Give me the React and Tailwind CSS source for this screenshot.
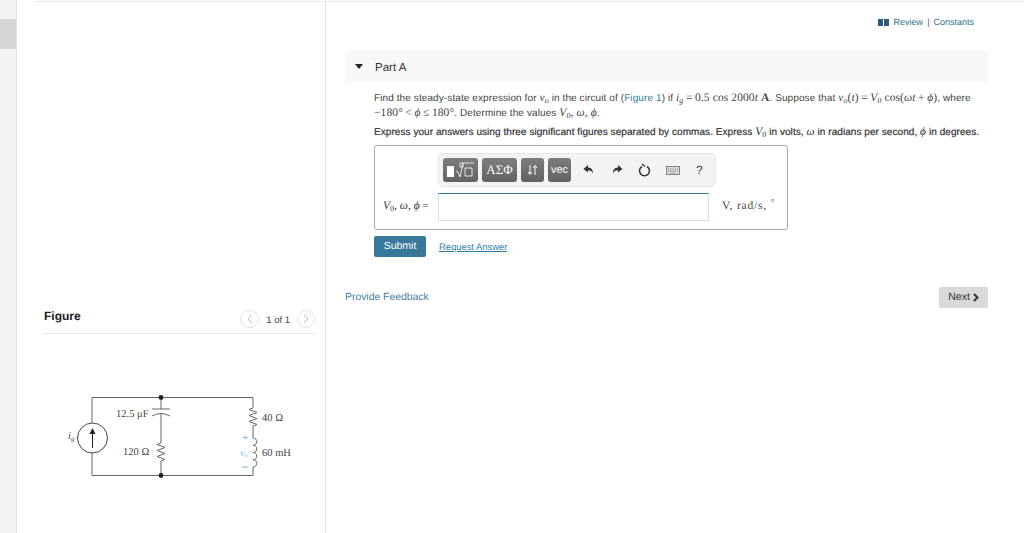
import React from "react";

const sans = { fontFamily: '"Liberation Sans", Arial, sans-serif' };

const M = ({ children, className = "" }) => (
  <span className={`font-['Liberation_Serif',serif] text-[11.5px] font-normal [-webkit-text-stroke:0] ${className}`}>{children}</span>
);
const I = ({ children }) => <i className="font-['Liberation_Serif',serif]">{children}</i>;
const Sub = ({ children }) => <sub className="text-[8px] leading-none">{children}</sub>;
const Eq = ({ children }) => <span className="mx-[2.5px]">{children}</span>;

const ToolBtn = ({ children, className = "" }) => (
  <div className={`h-6 rounded-[3px] bg-gradient-to-b from-[#7d7d7d] to-[#626262] text-white flex items-center justify-center ${className}`}>
    {children}
  </div>
);

const Circuit = () => (
  <svg width="240" height="100" viewBox="0 0 240 100" className="block">
    <g fill="none" stroke="#666" strokeWidth="1">
      <path d="M32 38V12.5H193V23M193 41V53M193 82V90.5H32V68" />
      <circle cx="32.5" cy="53" r="15" stroke="#444" />
      <path d="M32.5 63V46" stroke="#222" />
      <path d="M101 12.5V24M92 24H110M92 31Q101 26 110 31M101 28.5V58M101 76V90.5" />
      <path d="M101 58l-4 1.5 8 3-8 3 8 3-8 3 8 3-4 1.5" />
      <path d="M193 23l-4 1.5 8 3-8 3 8 3-8 3 8 3-4 1.5" />
      <path d="M193 53c5 0 5 7.25 0 7.25c5 0 5 7.25 0 7.25c5 0 5 7.25 0 7.25c5 0 5 7.25 0 7.25" />
    </g>
    <path d="M32.5 43l-3 6h6z" fill="#222" />
    <circle cx="101" cy="12.5" r="2.4" fill="#222" />
    <circle cx="101" cy="90.5" r="2.4" fill="#222" />
    <g fontFamily="Liberation Serif, serif" fontSize="10.5" fill="#444">
      <text x="56" y="32">12.5 μF</text>
      <text x="63" y="70">120 Ω</text>
      <text x="202" y="36">40 Ω</text>
      <text x="202" y="71">60 mH</text>
      <text x="8" y="54" fontStyle="italic">i</text>
      <text x="11" y="56" fontSize="7" fontStyle="italic">g</text>
    </g>
    <g fontFamily="Liberation Serif, serif" fill="#6fb7e0">
      <text x="182" y="56" fontSize="11">+</text>
      <text x="180" y="71" fontSize="10" fontStyle="italic">v</text>
      <text x="184.5" y="72" fontSize="6" fontStyle="italic">o</text>
      <path d="M182 82h6" stroke="#6fb7e0" />
    </g>
  </svg>
);

export default function App() {
  return (
    <div className="w-[1024px] h-[533px] flex overflow-hidden bg-white text-[#333] [text-rendering:geometricPrecision]" style={sans}>
      {/* side rail */}
      <div className="w-[17px] shrink-0 bg-[#f3f3f3] border-r border-[#e2e2e2] pt-[19px]">
        <div className="h-[30px] bg-[#d6d6d6]" />
      </div>

      <div className="ml-[17px] mt-px flex-1 flex border-t border-[#e8e8e8] min-w-0">
        {/* figure pane */}
        <div className="w-[292px] shrink-0 border-r border-[#dfdfe6] pl-[10px] pr-[10px] pt-[306px]">
          <div className="h-[26px] flex items-start justify-between border-b border-[#e8e8e8]">
            <span className="text-[12px] font-bold text-[#222] leading-[16px]">Figure</span>
            <div className="flex items-center gap-[7px] pt-px text-[9.5px] text-[#444]">
              <span className="w-[19px] h-[18px] rounded-full border border-[#e3e3e3] flex items-center justify-center">
                <svg width="8" height="10" viewBox="0 0 8 10" fill="none" stroke="#bbb"><path d="M6 1 2 5l4 4" /></svg>
              </span>
              <span className="pt-[5px]">1 of 1</span>
              <span className="w-[18px] h-[18px] rounded-full border border-[#e3e3e3] flex items-center justify-center">
                <svg width="8" height="10" viewBox="0 0 8 10" fill="none" stroke="#bbb"><path d="M2 1l4 4-4 4" /></svg>
              </span>
            </div>
          </div>
          <div className="mt-[51px] ml-[16px]">
            <Circuit />
          </div>
        </div>

        {/* question pane */}
        <div className="w-[662px] shrink-0 pl-[19px]">
          <div className="h-[48px] pr-[14px] flex justify-end items-start gap-[4px] pt-[14px] text-[9px] text-[#2f6f8f]">
            <svg className="mt-[3px]" width="11" height="7" viewBox="0 0 11 7" fill="#2d5a78"><path d="M0 0h5v7H0zM6 0h5v7H6z" /></svg>
            <span className="ml-px">Review</span>
            <span className="text-[#555]">|</span>
            <span>Constants</span>
          </div>

          <div className="h-[33px] bg-[#f8f8f8] flex items-center">
            <span className="ml-[10px] w-0 h-0 border-l-[4px] border-r-[4px] border-t-[5px] border-l-transparent border-r-transparent border-t-[#222]" />
            <span className="ml-[12px] pt-[4px] text-[11.5px] text-[#333]">Part A</span>
          </div>

          <div className="pl-[29px] pt-[8px]">
            <p className="text-[10px] leading-[14px] text-[#444] whitespace-nowrap tracking-[0.1px]">
              Find the steady-state expression for <M><I>v</I><Sub><I>o</I></Sub></M> in the circuit of (<span className="text-[#2f7fa3]">Figure 1</span>) if <M><I>i</I><Sub><I>g</I></Sub><Eq>=</Eq>0.5 cos 2000<I>t</I> <b>A</b></M>. Suppose that <M><I>v</I><Sub><I>o</I></Sub>(<I>t</I>)<Eq>=</Eq><I>V</I><Sub>0</Sub> cos(<I>ωt</I><Eq>+</Eq><I>ϕ</I>)</M>, where
              <br />
              <M>−180°<Eq>&lt;</Eq><I>ϕ</I><Eq>≤</Eq>180°</M>. Determine the values <M><I>V</I><Sub>0</Sub>, <I>ω</I>, <I>ϕ</I></M>.
            </p>
            <p className="mt-[4px] text-[10px] leading-[14px] text-[#333] whitespace-nowrap tracking-[0.06px] [-webkit-text-stroke:0.2px_#333]">
              Express your answers using three significant figures separated by commas. Express <M><I>V</I><Sub>0</Sub></M> in volts, <M><I>ω</I></M> in radians per second, <M><I>ϕ</I></M> in degrees.
            </p>

            <div className="mt-[5px] w-[414px] h-[85px] border border-[#a9a9a9] rounded-[3px] pt-[7px]">
              <div className="ml-[63px] w-[278px] h-[34px] rounded-[5px] bg-[#f3f3f3] border border-[#e6e6e6] flex items-center pl-[4px]">
                <ToolBtn className="w-[35px] gap-[2px]">
                  <span className="w-[7px] h-[11px] bg-white mt-[3px]" />
                  <svg width="18" height="16" viewBox="0 0 18 16" fill="none" stroke="#fff" strokeWidth="0.8">
                    <path d="M0 9l2 1 2 5 3-14h11M9 6h7v8H9zM4 1h3v4H4z" />
                  </svg>
                </ToolBtn>
                <ToolBtn className="ml-1 w-[35px] text-[13px] font-['Liberation_Serif',serif]">AΣΦ</ToolBtn>
                <ToolBtn className="ml-1 w-[23px]">
                  <svg width="11" height="12" viewBox="0 0 11 12" fill="none" stroke="#fff"><path d="M3 1v9M1 8l2 2.5L5 8M8 11V2M6 4l2-2.5L10 4" /></svg>
                </ToolBtn>
                <ToolBtn className="ml-1 w-[23px] text-[11px]">vec</ToolBtn>
                <svg className="ml-[12px]" width="12" height="12" viewBox="0 0 12 12" fill="#333"><path d="M5 1 0.5 5 5 8.5V6.2c2.5 0 4 .8 5 3.3C10 6 8.5 3.7 5 3.5z" /></svg>
                <svg className="ml-[16px]" width="12" height="12" viewBox="0 0 12 12" fill="#333"><path d="M7 1l4.5 4L7 8.5V6.2c-2.5 0-4 .8-5 3.3C2 6 3.5 3.7 7 3.5z" /></svg>
                <svg className="ml-[15px]" width="13" height="14" viewBox="0 0 13 14" fill="none" stroke="#333" strokeWidth="1.5"><path d="M4 3.5a5 5 0 1 0 5 0" /><path d="M4 1l3 2.5" /></svg>
                <svg className="ml-[15px]" width="14" height="9" viewBox="0 0 14 9" fill="#ddd" stroke="#555" strokeWidth="0.7"><rect x="0.5" y="0.5" width="13" height="8" /><path d="M2 3h10M2 5h10M4 7h6" strokeDasharray="1 0.8" /></svg>
                <span className="ml-[16px] text-[12px] text-[#333]">?</span>
              </div>

              <div className="mt-[6px] flex items-center">
                <M className="ml-[8px] w-[55px] whitespace-nowrap text-[#333]"><I>V</I><Sub>0</Sub>, <I>ω</I>, <I>ϕ</I> <span className="text-[10px]">=</span></M>
                <div className="w-[271px] h-[28px] border border-[#cfe0e8] border-t-[#3a7a99] bg-white" />
                <M className="ml-[13px] text-[#444] whitespace-nowrap tracking-[0.8px]">V, rad/s, <sup className="text-[9px]">°</sup></M>
              </div>
            </div>

            <div className="mt-[6px] flex items-center">
              <div className="w-[52px] h-[21px] rounded-[2px] bg-[#37789b] text-white text-[10.5px] flex items-center justify-center">Submit</div>
              <span className="ml-[13px] pt-px text-[9.4px] text-[#2f7fa3] underline">Request Answer</span>
            </div>
          </div>

          <div className="mt-[30px] flex items-center justify-between">
            <span className="text-[10.4px] text-[#3f7f9f]">Provide Feedback</span>
            <div className="w-[49px] h-[21px] rounded-[2px] bg-[#d9d9d9] text-[10.5px] text-[#333] flex items-center justify-center gap-[3px]">
              Next
              <svg width="6" height="9" viewBox="0 0 6 9" fill="none" stroke="#333" strokeWidth="2"><path d="M1 1l3.5 3.5L1 8" /></svg>
            </div>
          </div>
        </div>
      </div>
    </div>
  );
}
